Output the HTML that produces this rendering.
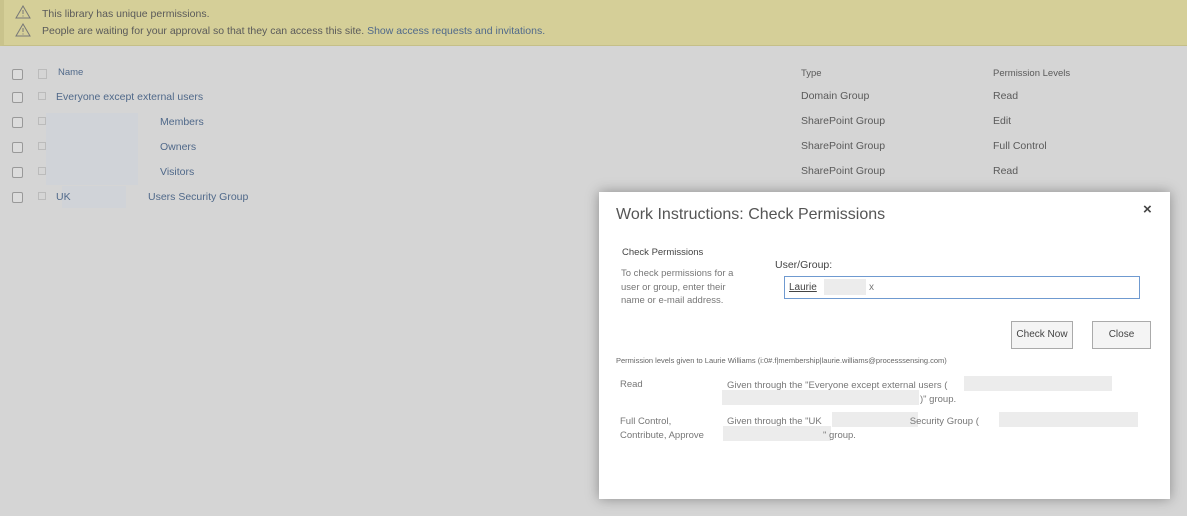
<!DOCTYPE html>
<html><head><style>
body{margin:0;width:1187px;height:516px;background:#d5d5d5;font-family:"Liberation Sans",sans-serif;position:relative;overflow:hidden;color:#555}
.a{position:absolute;white-space:nowrap}
.ban{position:absolute;left:0;top:0;width:1187px;height:46px;background:#d5cf98;border-bottom:1px solid #c5bf88;border-left:4px solid #c9c38c;box-sizing:border-box}
.t{font-size:10.5px;color:#5a5a5a}
.l{font-size:10.5px;color:#50698a}
.cb{position:absolute;width:9px;height:9px;border:1px solid #999;border-radius:2px;background:#dcdcdc}
.cs{position:absolute;width:6px;height:6px;border:1px solid #bbb}
.blur{position:absolute;background:#d0d3d8}
.dlg{position:absolute;left:599px;top:192px;width:571px;height:307px;background:#fff;box-shadow:0 0 12px rgba(0,0,0,.35)}
.d{font-size:9.5px;color:#777}
.g{position:absolute;background:#ececec}
.btn{position:absolute;border:1px solid #aaa;background:#f4f4f4;font-size:10px;color:#444;text-align:center;line-height:26px;height:26px}
</style></head><body>
<div class="ban"></div>
<svg class="a" style="left:15px;top:5px" width="16" height="14"><path d="M8 1L15 13H1Z" fill="none" stroke="#777"/><path d="M8 5v4M8 10.5v1" stroke="#777"/></svg>
<svg class="a" style="left:15px;top:23px" width="16" height="14"><path d="M8 1L15 13H1Z" fill="none" stroke="#777"/><path d="M8 5v4M8 10.5v1" stroke="#777"/></svg>
<div class="a t" style="left:42px;top:8px">This library has unique permissions.</div>
<div class="a t" style="left:42px;top:25px">People are waiting for your approval so that they can access this site. <span class="l">Show access requests and invitations.</span></div>

<div class="cb" style="left:12px;top:69px"></div><div class="cs" style="left:38px;top:69px;width:7px;height:8px"></div>
<div class="a t" style="left:58px;top:67px;font-size:9.5px;color:#50698a">Name</div>
<div class="a t" style="left:801px;top:68px;font-size:9.5px">Type</div>
<div class="a t" style="left:993px;top:68px;font-size:9.5px">Permission Levels</div>

<div class="cb" style="left:12px;top:92px"></div><div class="cs" style="left:38px;top:92px"></div>
<div class="a l" style="left:56px;top:91px">Everyone except external users</div>
<div class="a t" style="left:801px;top:90px">Domain Group</div><div class="a t" style="left:993px;top:90px">Read</div>

<div class="blur" style="left:46px;top:113px;width:92px;height:72px"></div>
<div class="cb" style="left:12px;top:117px"></div><div class="cs" style="left:38px;top:117px"></div>
<div class="a l" style="left:160px;top:116px">Members</div>
<div class="a t" style="left:801px;top:115px">SharePoint Group</div><div class="a t" style="left:993px;top:115px">Edit</div>

<div class="cb" style="left:12px;top:142px"></div><div class="cs" style="left:38px;top:142px"></div>
<div class="a l" style="left:160px;top:141px">Owners</div>
<div class="a t" style="left:801px;top:140px">SharePoint Group</div><div class="a t" style="left:993px;top:140px">Full Control</div>

<div class="cb" style="left:12px;top:167px"></div><div class="cs" style="left:38px;top:167px"></div>
<div class="a l" style="left:160px;top:166px">Visitors</div>
<div class="a t" style="left:801px;top:165px">SharePoint Group</div><div class="a t" style="left:993px;top:165px">Read</div>

<div class="blur" style="left:62px;top:186px;width:64px;height:22px"></div>
<div class="cb" style="left:12px;top:192px"></div><div class="cs" style="left:38px;top:192px"></div>
<div class="a l" style="left:56px;top:191px">UK</div>
<div class="a l" style="left:148px;top:191px">Users Security Group</div>

<div class="dlg">
<div class="a" style="left:17px;top:14px;font-size:16px;color:#555">Work Instructions: Check Permissions</div>
<div class="a" style="left:544px;top:9px;font-size:15px;color:#444;font-weight:bold">×</div>
<div class="a" style="left:23px;top:55px;font-size:9.5px;color:#444">Check Permissions</div>
<div class="a d" style="left:22px;top:75px;line-height:13.5px">To check permissions for a<br>user or group, enter their<br>name or e-mail address.</div>
<div class="a" style="left:176px;top:67px;font-size:10.5px;color:#444">User/Group:</div>
<div class="a" style="left:185px;top:84px;width:354px;height:21px;border:1px solid #6f9ad0"></div>
<div class="g" style="left:225px;top:87px;width:42px;height:16px"></div>
<div class="a" style="left:190px;top:90px;font-size:10px;color:#444;text-decoration:underline">Laurie</div>
<div class="a" style="left:270px;top:90px;font-size:10px;color:#777">x</div>
<div class="btn" style="left:412px;top:129px;width:60px">Check Now</div>
<div class="btn" style="left:493px;top:129px;width:57px">Close</div>
<div class="a" style="left:17px;top:164px;font-size:7.5px;color:#666">Permission levels given to Laurie Williams (i:0#.f|membership|laurie.williams@processsensing.com)</div>
<div class="g" style="left:365px;top:184px;width:148px;height:15px"></div>
<div class="g" style="left:123px;top:198px;width:197px;height:15px"></div>
<div class="g" style="left:233px;top:220px;width:86px;height:15px"></div>
<div class="g" style="left:400px;top:220px;width:139px;height:15px"></div>
<div class="g" style="left:124px;top:234px;width:108px;height:15px"></div>
<div class="a d" style="left:21px;top:187px">Read</div>
<div class="a d" style="left:128px;top:187px;line-height:14px">Given through the "Everyone except external users (<br><span style="margin-left:193px">)" group.</span></div>
<div class="a d" style="left:21px;top:223px;line-height:14px">Full Control,<br>Contribute, Approve</div>
<div class="a d" style="left:128px;top:223px;line-height:14px">Given through the "UK<span style="margin-left:88px">Security Group (</span><br><span style="margin-left:96px">" group.</span></div>
</div>
</body></html>
